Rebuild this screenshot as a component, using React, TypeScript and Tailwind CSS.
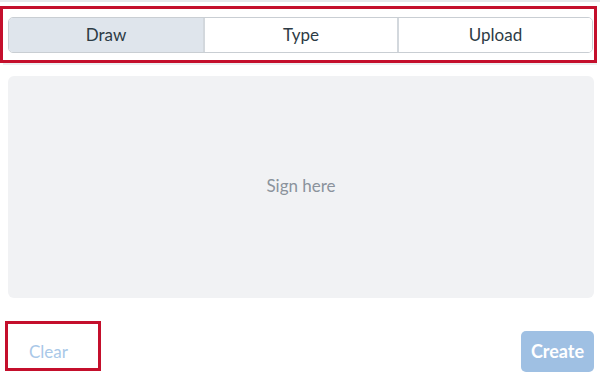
import React from "react";

export default function App() {
  const font = { fontFamily: "Lato, 'Noto Sans', sans-serif" };
  return (
    <div className="w-[600px] h-[373px] bg-white overflow-hidden flex flex-col" style={font}>
      <div className="h-[2px] bg-[#e6e8eb]" />
      <div className="mt-[4px] w-[597px] h-[57px] border-[3px] border-[#c40f2c] pl-[5px] pr-[1px] pt-[8px]">
        <div className="flex h-[36px] rounded-[5px] border border-[#c9ced3] overflow-hidden text-[17px] text-[#2d3b45]">
          <div className="w-[196px] flex items-center justify-center bg-[#dfe5ec] border-r-2 border-[#d3d8dd]">Draw</div>
          <div className="w-[194px] flex items-center justify-center bg-white border-r-2 border-[#d3d8dd]">Type</div>
          <div className="flex-1 flex items-center justify-center bg-white">Upload</div>
        </div>
      </div>
      <div className="h-[2px] bg-[#eceef0] mx-[3px]" />
      <div className="ml-[8px] mt-[11px] w-[586px] h-[222px] rounded-[6px] bg-[#f1f2f4] flex items-center justify-center pb-[2px] text-[17px] text-[#8b939c]">
        Sign here
      </div>
      <div className="flex items-start justify-between mt-[23px]">
        <div className="ml-[5px] w-[96px] h-[50px] border-[3px] border-[#c40f2c] pl-[21px] pt-[15px] text-[17px] text-[#a9c8e8]">
          Clear
        </div>
        <div className="mt-[10px] mr-[6px] w-[73px] h-[41px] rounded-[5px] bg-[#9fc0e3] flex items-center justify-center text-[18px] font-bold text-white">
          Create
        </div>
      </div>
    </div>
  );
}
